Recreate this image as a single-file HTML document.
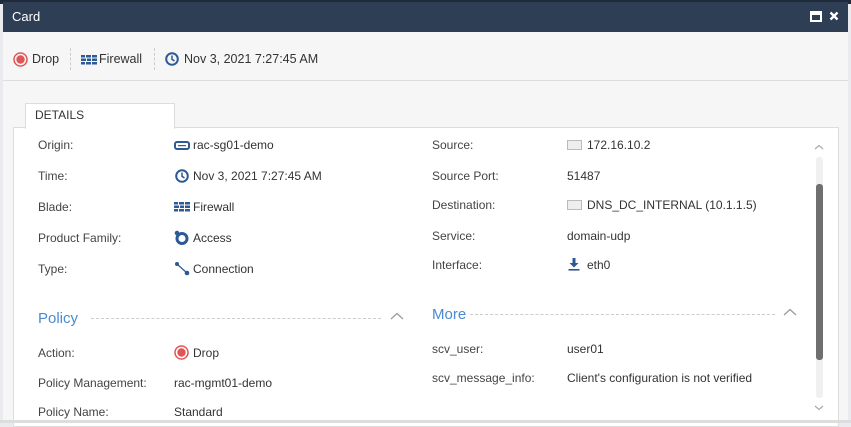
<!DOCTYPE html>
<html><head><style>
*{margin:0;padding:0;box-sizing:border-box}
body{width:851px;height:423px;overflow:hidden;background:#e9ebee;font-family:"Liberation Sans",sans-serif;font-size:12px;color:#333;position:relative}
.a{position:absolute;white-space:nowrap}
.lbl{color:#444}
.h{color:#4a8bd1;font-size:15px}
.dots{position:absolute;border-top:1px dashed #ccc;height:0}
.tb{font-size:12.5px}
</style></head><body>
<div class="a" style="left:0;top:0;width:851px;height:4px;background:#1f2a3a"></div>
<div class="a" style="left:3px;top:2px;width:845px;height:30px;background:#2e3e55"></div>
<div class="a" style="left:12px;top:9px;color:#fff;font-size:13px">Card</div>
<div class="a" style="left:810px;top:11px;width:12px;height:11px;border:2px solid #fff;border-top-width:4px"></div>
<svg class="a" style="left:829px;top:11px" width="10" height="10"><path d="M1.5 1.5L8.5 8.5M8.5 1.5L1.5 8.5" stroke="#fff" stroke-width="2.4"/></svg>
<div class="a" style="left:3px;top:32px;width:845px;height:391px;background:#f6f6f6"></div>
<div class="a" style="left:3px;top:80px;width:845px;height:1px;background:#ddd"></div>
<svg class="a" style="left:13px;top:52px" width="15" height="15"><circle cx="7.5" cy="7.5" r="6.5" fill="none" stroke="#e05656" stroke-width="1.5"/><circle cx="7.5" cy="7.5" r="4.2" fill="#e05656"/></svg>
<div class="a tb" style="left:32px;top:52px">Drop</div>
<div class="a" style="left:70px;top:48px;height:22px;border-left:1px dashed #ccc"></div>
<svg class="a" style="left:81px;top:55px" width="16" height="10" fill="#2d5a96"><rect x="0" y="0" width="4" height="2.5"/><rect x="5" y="0" width="5" height="2.5"/><rect x="11" y="0" width="5" height="2.5"/><rect x="0" y="3.5" width="5" height="2.5"/><rect x="6" y="3.5" width="4" height="2.5"/><rect x="11" y="3.5" width="5" height="2.5"/><rect x="0" y="7" width="4" height="2.5"/><rect x="5" y="7" width="5" height="2.5"/><rect x="11" y="7" width="5" height="2.5"/></svg>
<div class="a tb" style="left:99px;top:52px">Firewall</div>
<div class="a" style="left:154px;top:48px;height:22px;border-left:1px dashed #ccc"></div>
<svg class="a" style="left:165px;top:52px" width="14" height="14"><circle cx="7" cy="7" r="5.8" fill="none" stroke="#2d5a96" stroke-width="2"/><path d="M7 3.5V7.3L9.5 9" fill="none" stroke="#2d5a96" stroke-width="1.5"/></svg>
<div class="a tb" style="left:184px;top:52px">Nov 3, 2021 7:27:45 AM</div>
<div class="a" style="left:25px;top:103px;width:150px;height:26px;background:#fff;border:1px solid #ddd;border-bottom:none;z-index:2"></div>
<div class="a" style="left:35px;top:108px;font-size:12px;z-index:3">DETAILS</div>
<div class="a" style="left:13px;top:127px;width:826px;height:300px;background:#fff;border:1px solid #ddd"></div>
<div class="a" style="left:816px;top:157px;width:7px;height:241px;background:#f0f0f0;border-radius:3px"></div>
<div class="a" style="left:816px;top:184px;width:7px;height:176px;background:#6f6f6f;border-radius:3px"></div>
<svg class="a" style="left:814px;top:144px" width="10" height="6"><path d="M1 5L5 1.5L9 5" fill="none" stroke="#aaa" stroke-width="1.2"/></svg>
<svg class="a" style="left:814px;top:405px" width="10" height="6"><path d="M1 1L5 4.5L9 1" fill="none" stroke="#aaa" stroke-width="1.2"/></svg>

<div class="a lbl" style="left:38px;top:138px">Origin:</div>
<svg class="a" style="left:174px;top:141px" width="16" height="9"><rect x="1" y="1" width="14" height="7" rx="2" fill="none" stroke="#2d5a96" stroke-width="2"/><rect x="4" y="4" width="8" height="1.2" fill="#2d5a96"/></svg>
<div class="a" style="left:193px;top:138px">rac-sg01-demo</div>
<div class="a lbl" style="left:38px;top:169px">Time:</div>
<svg class="a" style="left:175px;top:169px" width="14" height="14"><circle cx="7" cy="7" r="5.8" fill="none" stroke="#2d5a96" stroke-width="2"/><path d="M7 3.5V7.3L9.5 9" fill="none" stroke="#2d5a96" stroke-width="1.5"/></svg>
<div class="a" style="left:193px;top:169px">Nov 3, 2021 7:27:45 AM</div>
<div class="a lbl" style="left:38px;top:200px">Blade:</div>
<svg class="a" style="left:174px;top:202px" width="16" height="10" fill="#2d5a96"><rect x="0" y="0" width="4" height="2.5"/><rect x="5" y="0" width="5" height="2.5"/><rect x="11" y="0" width="5" height="2.5"/><rect x="0" y="3.5" width="5" height="2.5"/><rect x="6" y="3.5" width="4" height="2.5"/><rect x="11" y="3.5" width="5" height="2.5"/><rect x="0" y="7" width="4" height="2.5"/><rect x="5" y="7" width="5" height="2.5"/><rect x="11" y="7" width="5" height="2.5"/></svg>
<div class="a" style="left:193px;top:200px">Firewall</div>
<div class="a lbl" style="left:38px;top:231px">Product Family:</div>
<svg class="a" style="left:174px;top:230px" width="15" height="15"><circle cx="8" cy="8.5" r="5" fill="none" stroke="#2d5a96" stroke-width="3"/><circle cx="3" cy="3" r="2.3" fill="#2d5a96"/></svg>
<div class="a" style="left:193px;top:231px">Access</div>
<div class="a lbl" style="left:38px;top:262px">Type:</div>
<svg class="a" style="left:174px;top:261px" width="16" height="15"><path d="M3 3L13 12" stroke="#2d5a96" stroke-width="1.2"/><circle cx="3" cy="3" r="2" fill="#2d5a96"/><circle cx="13" cy="12" r="2.3" fill="#2d5a96"/></svg>
<div class="a" style="left:193px;top:262px">Connection</div>

<div class="a h" style="left:38px;top:310px">Policy</div>
<div class="dots" style="left:91px;top:318px;width:290px"></div>
<svg class="a" style="left:390px;top:312px" width="14" height="8"><path d="M1 7L7 1.5L13 7" fill="none" stroke="#999" stroke-width="1.2"/></svg>
<div class="a lbl" style="left:38px;top:346px">Action:</div>
<svg class="a" style="left:174px;top:345px" width="15" height="15"><circle cx="7.5" cy="7.5" r="6.5" fill="none" stroke="#e05656" stroke-width="1.5"/><circle cx="7.5" cy="7.5" r="4.2" fill="#e05656"/></svg>
<div class="a" style="left:193px;top:346px">Drop</div>
<div class="a lbl" style="left:38px;top:376px">Policy Management:</div>
<div class="a" style="left:174px;top:376px">rac-mgmt01-demo</div>
<div class="a lbl" style="left:38px;top:405px">Policy Name:</div>
<div class="a" style="left:174px;top:405px">Standard</div>

<div class="a lbl" style="left:432px;top:138px">Source:</div>
<div class="a" style="left:567px;top:140px;width:15px;height:10px;border:1px solid #bbb;background:#eee"></div>
<div class="a" style="left:587px;top:138px">172.16.10.2</div>
<div class="a lbl" style="left:432px;top:169px">Source Port:</div>
<div class="a" style="left:567px;top:169px">51487</div>
<div class="a lbl" style="left:432px;top:198px">Destination:</div>
<div class="a" style="left:567px;top:200px;width:15px;height:10px;border:1px solid #bbb;background:#eee"></div>
<div class="a" style="left:587px;top:198px">DNS_DC_INTERNAL (10.1.1.5)</div>
<div class="a lbl" style="left:432px;top:229px">Service:</div>
<div class="a" style="left:567px;top:229px">domain-udp</div>
<div class="a lbl" style="left:432px;top:258px">Interface:</div>
<svg class="a" style="left:568px;top:258px" width="12" height="13" fill="#2d5a96"><path d="M4.5 0h3v5h3L6 9.5 1.5 5h3z"/><rect x="0.5" y="11" width="11" height="1.6"/></svg>
<div class="a" style="left:587px;top:258px">eth0</div>

<div class="a h" style="left:432px;top:306px">More</div>
<div class="dots" style="left:470px;top:314px;width:305px"></div>
<svg class="a" style="left:783px;top:308px" width="14" height="8"><path d="M1 7L7 1.5L13 7" fill="none" stroke="#999" stroke-width="1.2"/></svg>
<div class="a lbl" style="left:432px;top:342px">scv_user:</div>
<div class="a" style="left:567px;top:342px">user01</div>
<div class="a lbl" style="left:432px;top:371px">scv_message_info:</div>
<div class="a" style="left:567px;top:371px">Client's configuration is not verified</div>
<div class="a" style="left:0;top:420px;width:851px;height:3px;background:#ddd"></div>
</body></html>
